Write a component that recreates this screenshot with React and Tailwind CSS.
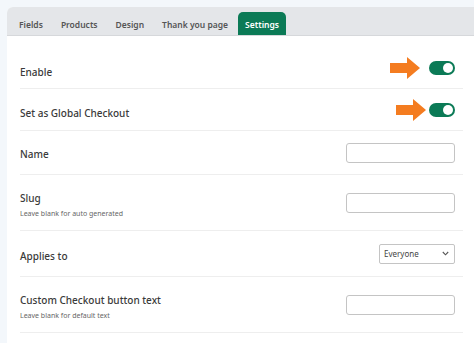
import React from 'react';

// 오렌지 화살표 (스크린샷 강조 표시)
const Arrow = () => (
    <svg width="30" height="22" viewBox="0 0 30 22">
        <polygon points="0,6 17,6 17,0 30,11 17,22 17,16 0,16" fill="#f47c20" />
    </svg>
);

const Toggle = () => (
    <div className="w-[26px] h-[14px] rounded-full bg-[#0b7a56] flex items-center justify-end pr-[2px]">
        <div className="w-[10px] h-[10px] rounded-full bg-white" />
    </div>
);

const TextInput = () => (
    <input type="text" className="w-[109px] h-[20px] border border-[#c4c4c4] rounded-[3px] bg-white" />
);

const tabs = ['Fields', 'Products', 'Design', 'Thank you page'];

const Row = ({ height, label, sub, top = 'pt-[4px]', children }) => (
    <div className={`${height} ml-[13px] mr-[11px] pr-[8px] border-b border-[#eeeeee] flex items-center justify-between`}>
        <div className={top}>
            <div className="text-[10px] font-medium text-[#3a3a3a] leading-[14px]">{label}</div>
            {sub && <div className="text-[7px] text-[#666] leading-[10px] mt-[4px]">{sub}</div>}
        </div>
        {children}
    </div>
);

export default function App() {
    return (
        <div className="w-[474px] h-[343px] bg-[#f3f7fb] pt-[7px] pl-[7px] overflow-hidden" style={{ fontFamily: '"Noto Sans", "Open Sans", sans-serif' }}>
            <div className="bg-white h-full rounded-tl-[6px]">
                {/* 탭 바 */}
                <div className="h-[29px] bg-[#e4e6e9] rounded-tl-[6px] border-b border-[#d6d8db] flex items-end pl-[3px]">
                    {tabs.map((t) => (
                        <div key={t} className="h-[23px] pt-[3px] px-[9px] flex items-center text-[8.5px] font-semibold text-[#555]">{t}</div>
                    ))}
                    <div className="h-[23px] pt-[3px] px-[7px] ml-[1px] flex items-center text-[8.5px] font-semibold text-white bg-[#0b7a56] rounded-t-[5px]">Settings</div>
                </div>

                <div className="pt-[12px]">
                    <Row height="h-[41px]" label="Enable" top="pt-[7px]">
                        <div className="flex items-center gap-[9px]">
                            <Arrow />
                            <Toggle />
                        </div>
                    </Row>
                    <Row height="h-[42px]" label="Set as Global Checkout" top="pt-[7px]">
                        <div className="flex items-center gap-[3px]">
                            <Arrow />
                            <Toggle />
                        </div>
                    </Row>
                    <Row height="h-[44px]" label="Name" top="pt-[2px]">
                        <TextInput />
                    </Row>
                    <Row height="h-[56px]" label="Slug" sub="Leave blank for auto generated">
                        <TextInput />
                    </Row>
                    <Row height="h-[46px]" label="Applies to">
                        <div className="w-[76px] h-[20px] border border-[#c4c4c4] rounded-[2px] flex items-center justify-between pl-[4px] pr-[5px]">
                            <span className="text-[8px] text-[#444]">Everyone</span>
                            <svg width="7" height="5" viewBox="0 0 7 5">
                                <polyline points="0.8,1 3.5,3.8 6.2,1" fill="none" stroke="#555" strokeWidth="1.1" />
                            </svg>
                        </div>
                    </Row>
                    <Row height="h-[56px]" label="Custom Checkout button text" sub="Leave blank for default text">
                        <TextInput />
                    </Row>
                </div>
            </div>
        </div>
    );
}
